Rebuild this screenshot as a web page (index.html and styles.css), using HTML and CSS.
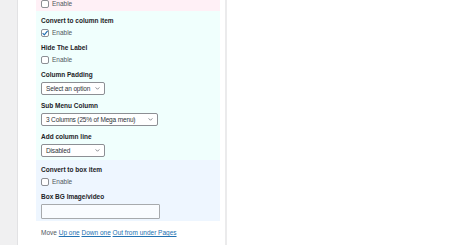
FILE: index.html
```html
<!DOCTYPE html>
<html lang="en">
<head>
    <meta charset="UTF-8">
    <meta name="viewport" content="width=device-width, initial-scale=1.0">
    <title>Menu item settings</title>
    <link rel="stylesheet" href="styles.css">
</head>
<body>
    <div class="page">
        <div class="sidebar"></div>
        <div class="panel">
            <div class="settings">
                <div class="section pink">
                    <div class="field top-cut">
                        <label class="check"><span class="box"></span>Enable</label>
                    </div>
                </div>
                <div class="section cyan">
                    <div class="field">
                        <div class="label">Convert to column item</div>
                        <label class="check">
                            <span class="box checked">
                                <svg viewBox="0 0 8 8" width="8" height="8"><path d="M1.6 4.2 L3.3 5.9 L6.6 1.9" fill="none" stroke="#2271b1" stroke-width="1.2"/></svg>
                            </span>Enable
                        </label>
                    </div>
                    <div class="field">
                        <div class="label">Hide The Label</div>
                        <label class="check"><span class="box"></span>Enable</label>
                    </div>
                    <div class="field">
                        <div class="label">Column Padding</div>
                        <div class="select small">
                            <span>Select an option</span>
                            <svg viewBox="0 0 6 4" width="5" height="3"><path d="M0.5 0.5 L3 3 L5.5 0.5" fill="none" stroke="#50575e" stroke-width="0.9"/></svg>
                        </div>
                    </div>
                    <div class="field">
                        <div class="label">Sub Menu Column</div>
                        <div class="select wide">
                            <span>3 Columns (25% of Mega menu)</span>
                            <svg viewBox="0 0 6 4" width="5" height="3"><path d="M0.5 0.5 L3 3 L5.5 0.5" fill="none" stroke="#50575e" stroke-width="0.9"/></svg>
                        </div>
                    </div>
                    <div class="field">
                        <div class="label">Add column line</div>
                        <div class="select small">
                            <span>Disabled</span>
                            <svg viewBox="0 0 6 4" width="5" height="3"><path d="M0.5 0.5 L3 3 L5.5 0.5" fill="none" stroke="#50575e" stroke-width="0.9"/></svg>
                        </div>
                    </div>
                </div>
                <div class="section blue">
                    <div class="field">
                        <div class="label">Convert to box item</div>
                        <label class="check"><span class="box"></span>Enable</label>
                    </div>
                    <div class="field">
                        <div class="label">Box BG Image/video</div>
                        <input class="text-input" type="text">
                    </div>
                </div>
                <div class="move">
                    Move <a href="#">Up one</a> <a href="#">Down one</a> <a href="#">Out from under Pages</a>
                </div>
            </div>
        </div>
    </div>
</body>
</html>
```

FILE: styles.css
```css
*{
    padding: 0;
    margin: 0;
    box-sizing: border-box;
}

body{
    background-color: white;
    font-family: "Liberation Sans", Arial, sans-serif;
    font-size: 6.5px;
    color: #1d2327;
    overflow: hidden;
}
.page{
    display: flex;
    height: 245px;
}
.sidebar{
    width: 18px;
    background-color: #f0f0f1;
    border-right: 1px solid #e2e2e4;
}
.panel{
    width: 209px;
    padding-left: 18px;
    padding-right: 5px;
    border-right: 2px solid #ebebec;
}
.section{
    padding: 0 5px;
}
.pink{
    background-color: #fff0f6;
    height: 12px;
}
.cyan{
    background-color: #f0fffd;
    height: 149px;
    padding-top: 2px;
}
.blue{
    background-color: #eef6ff;
    height: 61px;
    padding-top: 2px;
}
.field{
    padding-top: 4px;
    padding-bottom: 3px;
}
.top-cut{
    padding-top: 0;
    margin-top: -1px;
}
.label{
    font-weight: bold;
    line-height: 8px;
    height: 8px;
    margin-bottom: 3px;
    color: #1d2327;
}
.check{
    display: flex;
    align-items: center;
    height: 9px;
    color: #50575e;
    line-height: 8px;
}
.field .label + .check{
    margin-top: 1px;
}
.box{
    width: 8px;
    height: 8px;
    border: 1px solid #8c8f94;
    border-radius: 2px;
    background-color: white;
    margin-right: 3px;
    display: flex;
    align-items: center;
    justify-content: center;
}
.box svg{
    display: block;
    flex: none;
}
.select{
    display: flex;
    align-items: center;
    justify-content: space-between;
    height: 13px;
    padding: 0 4px 0 4px;
    border: 1px solid #8c8f94;
    border-radius: 2px;
    background-color: white;
    color: #2c3338;
    letter-spacing: -0.15px;
}
.select svg{
    display: block;
    flex: none;
}
.small{
    width: 64px;
}
.wide{
    width: 117px;
}
.text-input{
    display: block;
    width: 119px;
    height: 15px;
    border: 1px solid #a7aaad;
    border-radius: 1px;
    background-color: #f9fcff;
}
.move{
    padding: 8px 5px 0;
    line-height: 8px;
    color: #50575e;
}
.move a{
    color: #2271b1;
}
```
